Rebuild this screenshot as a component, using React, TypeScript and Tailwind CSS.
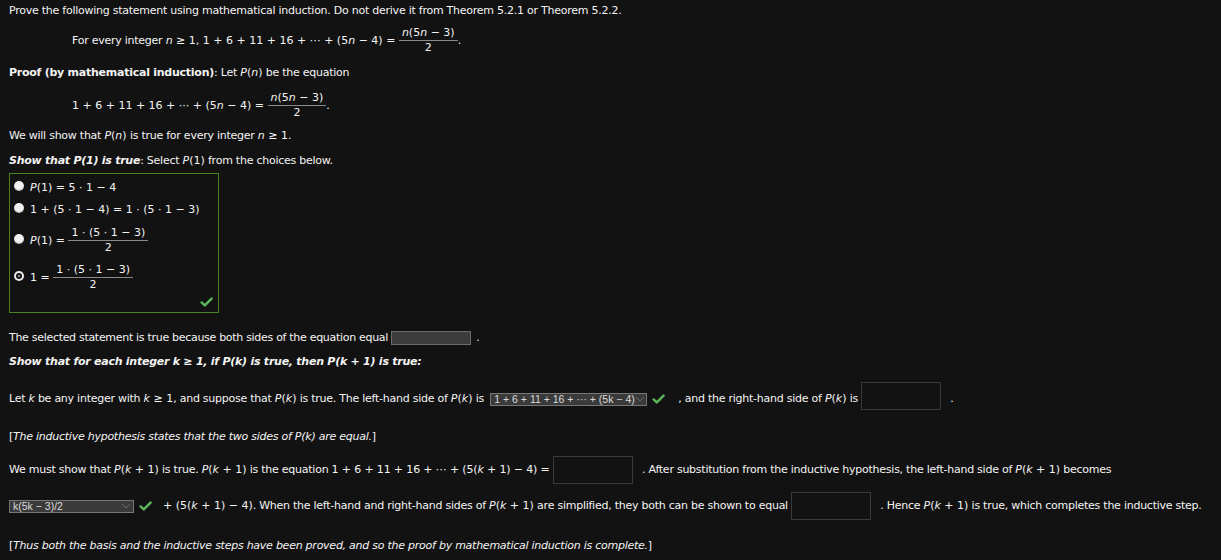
import React from "react";

function V({ children }: { children: React.ReactNode }) {
  return <i className="italic">{children}</i>;
}

function M({ children }: { children: React.ReactNode }) {
  return <span className="tracking-normal">{children}</span>;
}

function Frac({ num, den }: { num: React.ReactNode; den: React.ReactNode }) {
  return (
    <span className="inline-flex flex-col items-center shrink-0 tracking-normal">
      <span className="px-[3px] leading-[14px] border-b border-[#8a8a8a]">{num}</span>
      <span className="leading-[14px]">{den}</span>
    </span>
  );
}

function Check({ className = "" }: { className?: string }) {
  return (
    <svg width="13" height="10" viewBox="0 0 13 10" className={`shrink-0 ${className}`}>
      <path
        d="M1.6 5.4 L4.8 8.4 L11.6 1.6"
        fill="none"
        stroke="#5cb85c"
        strokeWidth="2.4"
        strokeLinecap="round"
        strokeLinejoin="round"
      />
    </svg>
  );
}

function Radio({ selected = false }: { selected?: boolean }) {
  if (selected) {
    return (
      <span className="w-[10px] h-[10px] rounded-full bg-[#ececec] flex items-center justify-center shrink-0 mb-[4px]">
        <span className="w-[6px] h-[6px] rounded-full bg-[#161616] flex items-center justify-center">
          <span className="w-[2px] h-[2px] rounded-full bg-[#bbb]" />
        </span>
      </span>
    );
  }
  return <span className="w-[10px] h-[10px] rounded-full bg-[#f2f2f2] shadow-[inset_0_-1px_1px_rgba(0,0,0,0.25)] shrink-0 mb-[4px]" />;
}

function Select({ className = "", children }: { className?: string; children: React.ReactNode }) {
  return (
    <span
      className={`h-[13px] bg-[#3a3a3a] border border-[#777] flex items-center justify-between pl-[3px] pr-[2px] shrink-0 ${className}`}
    >
      <span className="text-[#dcdcdc] text-[10.5px] tracking-normal leading-[11px] [font-family:'Liberation_Sans',sans-serif]">
        {children}
      </span>
      <svg width="10" height="6" viewBox="0 0 10 6" className="shrink-0">
        <path d="M1 1 L5 5 L9 1" fill="none" stroke="#6a6a6a" strokeWidth="1" />
      </svg>
    </span>
  );
}

function Box({ className = "" }: { className?: string }) {
  return <span className={`w-[80px] h-[28px] border border-[#3a3a3a] shrink-0 ${className}`} />;
}

export default function App() {
  return (
    <div className="w-[1221px] h-[560px] overflow-hidden bg-[#121212] text-[#f4f4f4] text-[11px] tracking-[-0.25px] leading-[16px] [font-family:'DejaVu_Sans',sans-serif] pl-[9px] whitespace-pre">
      <div className="h-[21px] flex items-center">
        Prove the following statement using mathematical induction. Do not derive it from Theorem 5.2.1 or Theorem 5.2.2.
      </div>

      <div className="pt-[5px] pl-[63px] flex items-center">
        <span>
          For every integer{" "}
          <M>
            <V>n</V> ≥ 1, 1 + 6 + 11 + 16 + ⋯ + (5<V>n</V> − 4) ={" "}
          </M>
        </span>
        <Frac
          num={
            <>
              <V>n</V>(5<V>n</V> − 3)
            </>
          }
          den="2"
        />
        <span>.</span>
      </div>

      <div className="mt-[10px] h-[16px] flex items-center">
        <span>
          <b className="font-bold">Proof (by mathematical induction)</b>: Let{" "}
          <M>
            <V>P</V>(<V>n</V>)
          </M>{" "}
          be the equation
        </span>
      </div>

      <div className="mt-[10px] pl-[63px] flex items-center">
        <M>
          1 + 6 + 11 + 16 + ··· + (5<V>n</V> − 4) ={" "}
        </M>
        <Frac
          num={
            <>
              <V>n</V>(5<V>n</V> − 3)
            </>
          }
          den="2"
        />
        <span>.</span>
      </div>

      <div className="mt-[8px] h-[16px] flex items-center">
        <span>
          We will show that{" "}
          <M>
            <V>P</V>(<V>n</V>)
          </M>{" "}
          is true for every integer{" "}
          <M>
            <V>n</V> ≥ 1
          </M>
          .
        </span>
      </div>

      <div className="mt-[9px] h-[16px] flex items-center">
        <span>
          <b className="font-bold italic">Show that P(1) is true</b>: Select{" "}
          <M>
            <V>P</V>(1)
          </M>{" "}
          from the choices below.
        </span>
      </div>

      <div className="mt-[4px] w-[210px] h-[140px] border border-[#4b8320] pl-[4px] pr-[4px] pt-[6px] flex flex-col tracking-normal">
        <div className="h-[16px] flex items-center">
          <Radio />
          <span className="ml-[6px]">
            <V>P</V>(1) = 5 · 1 − 4
          </span>
        </div>
        <div className="mt-[6px] h-[16px] flex items-center">
          <Radio />
          <span className="ml-[6px]">1 + (5 · 1 − 4) = 1 · (5 · 1 − 3)</span>
        </div>
        <div className="mt-[8px] flex items-center">
          <Radio />
          <span className="ml-[6px]">
            <V>P</V>(1) ={" "}
          </span>
          <Frac num="1 · (5 · 1 − 3)" den="2" />
        </div>
        <div className="mt-[8px] flex items-center">
          <Radio selected />
          <span className="ml-[6px]">1 = </span>
          <Frac num="1 · (5 · 1 − 3)" den="2" />
        </div>
        <div className="mt-[5px] flex justify-end pr-[1px]">
          <Check />
        </div>
      </div>

      <div className="mt-[17px] h-[16px] flex items-center">
        <span className="tracking-[-0.3px]">The selected statement is true because both sides of the equation equal </span>
        <span className="w-[80px] h-[14px] bg-[#3c3c3c] border border-[#6a6a6a] shrink-0" />
        <span className="ml-[5px]">.</span>
      </div>

      <div className="mt-[8px] h-[16px] flex items-center">
        <b className="font-bold italic">
          Show that for each integer k ≥ 1, if P(k) is true, then P(k + 1) is true:
        </b>
      </div>

      <div className="mt-[12px] h-[34px] flex items-center">
        <span>
          Let <V>k</V> be any integer with{" "}
          <M>
            <V>k</V> ≥ 1
          </M>
          , and suppose that{" "}
          <M>
            <V>P</V>(<V>k</V>)
          </M>{" "}
          is true. The left-hand side of{" "}
          <M>
            <V>P</V>(<V>k</V>)
          </M>{" "}
          is{" "}
        </span>
        <Select className="w-[157px] ml-[3px]">1 + 6 + 11 + 16 + ··· + (5k − 4)</Select>
        <Check className="ml-[5px]" />
        <span className="ml-[13px]">
          , and the right-hand side of{" "}
          <M>
            <V>P</V>(<V>k</V>)
          </M>{" "}
          is{" "}
        </span>
        <Box className="self-start" />
        <span className="ml-[9px]">.</span>
      </div>

      <div className="mt-[13px] h-[16px] flex items-center">
        <span>
          [
          <i className="italic">
            The inductive hypothesis states that the two sides of <V>P</V>(<V>k</V>) are equal.
          </i>
          ]
        </span>
      </div>

      <div className="mt-[11px] h-[28px] flex items-center">
        <span>
          We must show that{" "}
          <M>
            <V>P</V>(<V>k</V> + 1)
          </M>{" "}
          is true.{" "}
          <M>
            <V>P</V>(<V>k</V> + 1)
          </M>{" "}
          is the equation{" "}
          <span className="tracking-[-0.15px]">
            1 + 6 + 11 + 16 + ⋯ + (5(<V>k</V> + 1) − 4) ={" "}
          </span>
        </span>
        <Box />
        <span className="ml-[9px]">
          . After substitution from the inductive hypothesis, the left-hand side of{" "}
          <M>
            <V>P</V>(<V>k</V> + 1)
          </M>{" "}
          becomes
        </span>
      </div>

      <div className="mt-[8px] h-[28px] flex items-center">
        <Select className="w-[125px]">k(5k − 3)/2</Select>
        <Check className="ml-[5px]" />
        <span className="ml-[11px]">
          <M>
            + (5(<V>k</V> + 1) − 4)
          </M>
          . When the left-hand and right-hand sides of{" "}
          <M>
            <V>P</V>(<V>k</V> + 1)
          </M>{" "}
          are simplified, they both can be shown to equal{" "}
        </span>
        <Box />
        <span className="ml-[9px]">
          . Hence{" "}
          <M>
            <V>P</V>(<V>k</V> + 1)
          </M>{" "}
          is true, which completes the inductive step.
        </span>
      </div>

      <div className="mt-[18px] h-[16px] flex items-center">
        <span>
          [
          <i className="italic">
            Thus both the basis and the inductive steps have been proved, and so the proof by mathematical induction is
            complete.
          </i>
          ]
        </span>
      </div>
    </div>
  );
}
